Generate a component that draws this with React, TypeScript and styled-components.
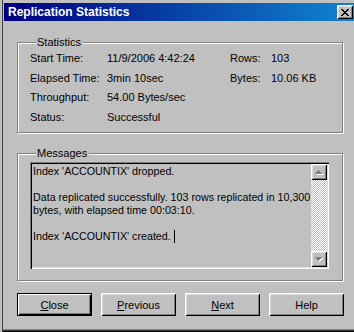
import React from "react";
import styled, { createGlobalStyle } from "styled-components";

const GlobalStyle = createGlobalStyle`
  html, body {
    margin: 0;
    padding: 0;
    background: #c0c0c0;
  }
  body {
    font-family: "Liberation Sans", Arial, sans-serif;
    font-size: 11px;
    color: #000;
  }
`;

const Window = styled.div`
  width: 354px;
  height: 332px;
  box-sizing: border-box;
  padding: 3px 0 0 4px;
  background: #c0c0c0;
  display: flex;
  flex-direction: column;
  overflow: hidden;
  box-shadow: inset 2px 0 #c0c0c0, inset 3px 0 #404040, inset 0 -1px #000,
    inset 0 -2px #404040, inset 0 -3px #808080;
`;

const TitleBar = styled.div`
  height: 18px;
  flex: none;
  display: flex;
  align-items: center;
  justify-content: space-between;
  padding: 0 1px 0 4px;
  background: linear-gradient(to right, #000080, #1084d0);
  color: #fff;
  font-weight: bold;
  font-size: 12px;
`;

const RaisedButton = styled.button<{ $default?: boolean }>`
  box-sizing: border-box;
  margin: 0;
  padding: 0;
  background: #c0c0c0;
  border: none;
  font-family: inherit;
  font-size: 11px;
  color: #000;
  display: flex;
  align-items: center;
  justify-content: center;
  box-shadow: ${(p) =>
    p.$default
      ? "inset 0 0 0 1px #000, inset 1px 1px #000, inset 2px 2px #fff, inset -2px -2px #000, inset -3px -3px #808080"
      : "inset 1px 1px #fff, inset -1px -1px #000, inset 2px 2px #dfdfdf, inset -2px -2px #808080"};
`;

const CaptionButton = styled(RaisedButton)`
  width: 16px;
  height: 14px;
`;

const Body = styled.div`
  flex: 1;
  padding: 0 0 0 13px;
  display: flex;
  flex-direction: column;
`;

const Group = styled.fieldset<{ $top: number }>`
  box-sizing: border-box;
  width: 326px;
  min-width: 0;
  margin: ${(p) => p.$top}px 0 0 0;
  padding: 0 12px 0 12px;
  border: 1px solid #808080;
  box-shadow: inset 1px 1px #fff, 1px 1px #fff;
`;

const Legend = styled.legend`
  padding: 0 2px 0 1px;
  margin-left: 6px;
  line-height: 13px;
  background: #c0c0c0;
`;

const StatsGrid = styled.div`
  display: grid;
  grid-template-columns: 77px 123px 41px auto;
  grid-template-rows: 20px 19px 20px 20px;
  align-items: center;
  margin-top: -1px;
  padding-bottom: 5px;
  white-space: nowrap;
`;

const Cell = styled.span<{ $col?: number }>`
  grid-column: ${(p) => p.$col ?? "auto"};
`;

const EditBox = styled.div`
  box-sizing: border-box;
  height: 107px;
  margin: 2px 1px 11px 0;
  display: flex;
  box-shadow: inset 1px 1px #808080, inset 2px 2px #000, inset -1px -1px #fff,
    inset -2px -2px #dfdfdf;
  padding: 2px;
`;

const EditText = styled.div`
  flex: 1;
  padding: 1px 0 0 1px;
  font-size: 10.7px;
  line-height: 13px;
  white-space: pre;
`;

const Line = styled.div`
  height: 13px;
`;

const Caret = styled.span`
  display: inline-block;
  width: 1px;
  height: 13px;
  margin-left: 3px;
  background: #000;
  vertical-align: top;
`;

const ScrollBar = styled.div`
  width: 16px;
  display: flex;
  flex-direction: column;
`;

const ScrollArrow = styled(RaisedButton)`
  width: 16px;
  height: 16px;
  flex: none;
`;

const ScrollTrack = styled.div`
  flex: 1;
  background: repeating-conic-gradient(#fff 0 25%, #c0c0c0 0 50%) 0 0 / 2px 2px;
`;

const ButtonRow = styled.div`
  display: flex;
  gap: 9px;
  margin-top: 12px;
`;

const DialogButton = styled(RaisedButton)`
  width: 75px;
  height: 23px;
`;

const CloseGlyph = () => (
  <svg width="8" height="7" viewBox="0 0 8 7" shapeRendering="crispEdges">
    <path
      d="M0 0h2v1h-2z M6 0h2v1h-2z M1 1h2v1h-2z M5 1h2v1h-2z M2 2h4v1h-4z M3 3h2v1h-2z M2 4h4v1h-4z M1 5h2v1h-2z M5 5h2v1h-2z M0 6h2v1h-2z M6 6h2v1h-2z"
      fill="#000"
    />
  </svg>
);

const Arrow = ({ down }: { down?: boolean }) => {
  const d = down
    ? "M0 0h7v1h-7z M1 1h5v1h-5z M2 2h3v1h-3z M3 3h1v1h-1z"
    : "M3 0h1v1h-1z M2 1h3v1h-3z M1 2h5v1h-5z M0 3h7v1h-7z";
  return (
    <svg width="8" height="5" viewBox="0 0 8 5" shapeRendering="crispEdges">
      <path d={d} fill="#fff" transform="translate(1 1)" />
      <path d={d} fill="#808080" />
    </svg>
  );
};

const stats = [
  { label: "Start Time:", value: "11/9/2006 4:42:24", extra: ["Rows:", "103"] },
  { label: "Elapsed Time:", value: "3min 10sec", extra: ["Bytes:", "10.06 KB"] },
  { label: "Throughput:", value: "54.00 Bytes/sec" },
  { label: "Status:", value: "Successful" },
];

const messages = [
  "Index 'ACCOUNTIX' dropped.",
  "",
  "Data replicated successfully. 103 rows replicated in 10,300",
  "bytes, with elapsed time 00:03:10.",
  "",
];

const App: React.FC = () => {
  return (
    <>
      <GlobalStyle />
      <Window>
        <TitleBar>
          <span>Replication Statistics</span>
          <CaptionButton>
            <CloseGlyph />
          </CaptionButton>
        </TitleBar>
        <Body>
          <Group $top={15}>
            <Legend>Statistics</Legend>
            <StatsGrid>
              {stats.map((s) => (
                <React.Fragment key={s.label}>
                  <Cell $col={1}>{s.label}</Cell>
                  <Cell $col={2}>{s.value}</Cell>
                  {s.extra && (
                    <>
                      <Cell $col={3}>{s.extra[0]}</Cell>
                      <Cell $col={4}>{s.extra[1]}</Cell>
                    </>
                  )}
                </React.Fragment>
              ))}
            </StatsGrid>
          </Group>
          <Group $top={14}>
            <Legend>Messages</Legend>
            <EditBox>
              <EditText>
                {messages.map((m, i) => (
                  <Line key={i}>{m}</Line>
                ))}
                <Line>
                  Index 'ACCOUNTIX' created.
                  <Caret />
                </Line>
              </EditText>
              <ScrollBar>
                <ScrollArrow>
                  <Arrow />
                </ScrollArrow>
                <ScrollTrack />
                <ScrollArrow>
                  <Arrow down />
                </ScrollArrow>
              </ScrollBar>
            </EditBox>
          </Group>
          <ButtonRow>
            <DialogButton $default>
              <span>
                <u>C</u>lose
              </span>
            </DialogButton>
            <DialogButton>
              <span>
                <u>P</u>revious
              </span>
            </DialogButton>
            <DialogButton>
              <span>
                <u>N</u>ext
              </span>
            </DialogButton>
            <DialogButton>Help</DialogButton>
          </ButtonRow>
        </Body>
      </Window>
    </>
  );
};

export default App;
